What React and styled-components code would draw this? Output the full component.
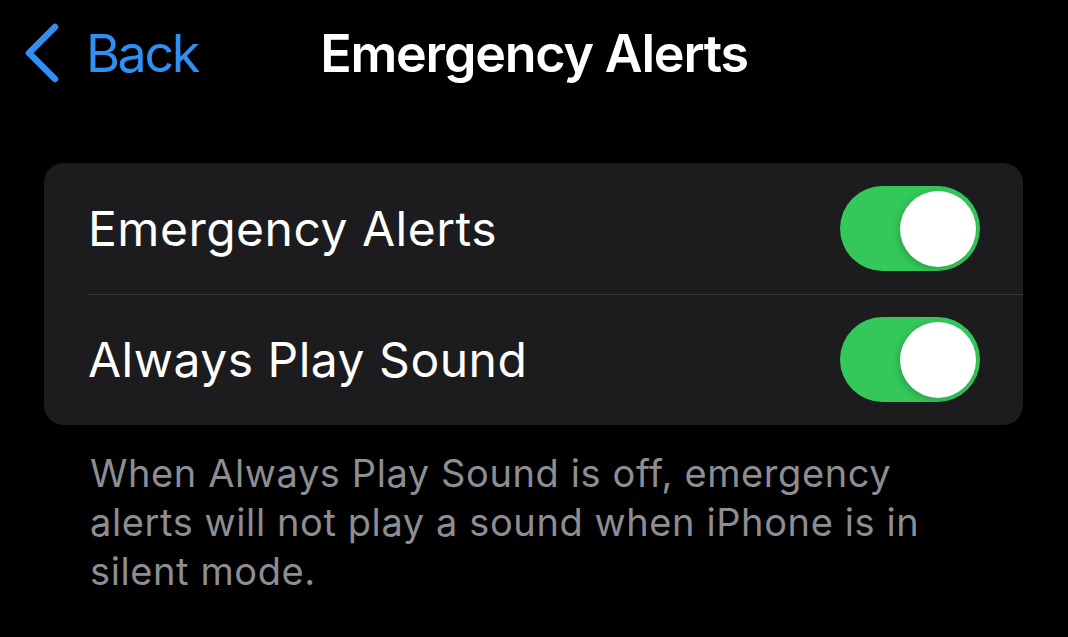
import React from "react";
import styled, { createGlobalStyle } from "styled-components";

const GlobalStyle = createGlobalStyle`
  html, body {
    margin: 0;
    padding: 0;
    background: #000;
  }
  body {
    font-family: Inter, "Noto Sans", "Liberation Sans", sans-serif;
    -webkit-font-smoothing: antialiased;
  }
`;

const Screen = styled.main`
  width: 1068px;
  height: 637px;
  background: #000;
  overflow: hidden;
`;

const NavBar = styled.header`
  display: grid;
  grid-template-columns: 1fr auto 1fr;
  align-items: center;
  height: 106px;
  padding: 0 24px;
`;

const BackButton = styled.button`
  display: flex;
  align-items: center;
  gap: 26px;
  justify-self: start;
  padding: 0;
  border: 0;
  background: none;
  color: #2f8ff2;
  font-family: inherit;
  font-size: 52px;
  font-weight: 400;
  letter-spacing: -2.4px;
  cursor: pointer;
`;

const Title = styled.h1`
  margin: 0;
  color: #fff;
  font-size: 52px;
  font-weight: 600;
  letter-spacing: -1.2px;
`;

const Card = styled.section`
  margin: 57px 45px 0 44px;
  background: #1c1c1e;
  border-radius: 20px;
  overflow: hidden;
`;

const Row = styled.div`
  display: flex;
  align-items: center;
  justify-content: space-between;
  height: 131px;
  padding: 0 43px 0 44px;
  position: relative;

  & + &::before {
    content: "";
    position: absolute;
    top: 0;
    left: 44px;
    right: 0;
    height: 1px;
    background: #38383a;
  }
`;

const Label = styled.span`
  color: #fff;
  font-size: 48px;
  font-weight: 400;
  letter-spacing: 0.5px;
`;

const Track = styled.button`
  display: flex;
  align-items: center;
  justify-content: ${(p) => (p.$on ? "flex-end" : "flex-start")};
  width: 140px;
  height: 85px;
  padding: 0 4px;
  border: 0;
  border-radius: 43px;
  background: ${(p) => (p.$on ? "#34c759" : "#39393d")};
  cursor: pointer;
`;

const Knob = styled.span`
  width: 76px;
  height: 76px;
  border-radius: 50%;
  background: #fff;
  box-shadow: -2px 2px 6px rgba(0, 0, 0, 0.18);
`;

const Footnote = styled.p`
  margin: 24px 135px 0 90px;
  color: #8d8d92;
  font-size: 38px;
  line-height: 49px;
  font-weight: 400;
  letter-spacing: 0.6px;
`;

const Chevron = () => (
  <svg width="36" height="60" viewBox="0 0 36 60" fill="none">
    <path
      d="M31 4 L5 30 L31 56"
      stroke="currentColor"
      strokeWidth="6.5"
      strokeLinecap="round"
      strokeLinejoin="round"
    />
  </svg>
);

const Toggle = ({ on }) => (
  <Track $on={on} aria-pressed={on}>
    <Knob />
  </Track>
);

const settings = [
  { label: "Emergency Alerts", on: true },
  { label: "Always Play Sound", on: true },
];

export default function App() {
  return (
    <Screen>
      <GlobalStyle />
      <NavBar>
        <BackButton>
          <Chevron />
          Back
        </BackButton>
        <Title>Emergency Alerts</Title>
        <span />
      </NavBar>
      <Card>
        {settings.map((s) => (
          <Row key={s.label}>
            <Label>{s.label}</Label>
            <Toggle on={s.on} />
          </Row>
        ))}
      </Card>
      <Footnote>
        When Always Play Sound is off, emergency alerts will not play a sound
        when iPhone is in silent mode.
      </Footnote>
    </Screen>
  );
}
